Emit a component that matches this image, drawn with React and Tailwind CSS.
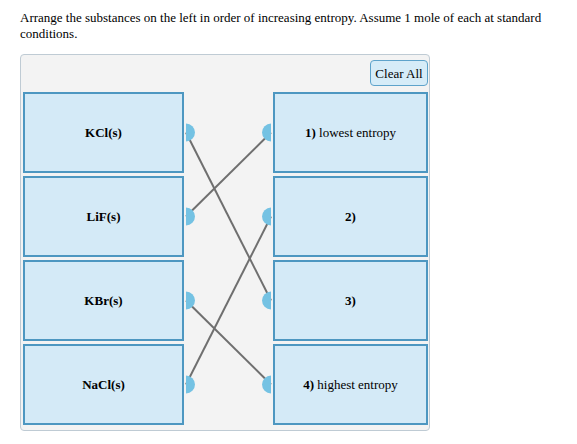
import React from 'react'

const leftItems = ['KCl(s)', 'LiF(s)', 'KBr(s)', 'NaCl(s)']
const rightItems = [
  { num: '1)', label: 'lowest entropy' },
  { num: '2)', label: '' },
  { num: '3)', label: '' },
  { num: '4)', label: 'highest entropy' },
]

// left index -> right index
const links = [
  [0, 2],
  [1, 0],
  [2, 3],
  [3, 1],
]

const PITCH = 84
const HALF = 40.5

function Wires() {
  const cy = (i) => i * PITCH + HALF
  return (
    <svg width="89" height="333" viewBox="0 0 89 333" className="shrink-0">
      {links.map(([a, b]) => (
        <line key={a} x1="2" y1={cy(a)} x2="87" y2={cy(b)} stroke="#6f6f6f" strokeWidth="2" />
      ))}
      {leftItems.map((_, i) => (
        <path key={'l' + i} d={`M2,${cy(i) - 9} A9,9 0 0 1 2,${cy(i) + 9} Z`} fill="#74c2e3" />
      ))}
      {rightItems.map((_, i) => (
        <path key={'r' + i} d={`M87,${cy(i) - 9} A9,9 0 0 0 87,${cy(i) + 9} Z`} fill="#74c2e3" />
      ))}
    </svg>
  )
}

export default function App() {
  return (
    <div className="pl-[20px] pt-[10px] [font-family:'Liberation_Serif',serif] text-[13px] text-black">
      <p className="w-[530px] leading-[16px]">
        Arrange the substances on the left in order of increasing entropy. Assume 1 mole of each at standard conditions.
      </p>

      <div className="mt-[12px] w-[410px] rounded-[4px] border border-[#bfcbd4] bg-[#f3f3f3] pt-[5px] pb-[5px] pl-[2px] pr-[1px]">
        <div className="flex justify-end">
          <button className="h-[26px] w-[58px] rounded-[4px] border border-[#5ea3cb] bg-[#d6ecf8] text-[13px] leading-none [font-family:'Liberation_Serif',serif]">
            Clear All
          </button>
        </div>

        <div className="mt-[6px] flex">
          <div className="flex w-[161px] shrink-0 flex-col gap-[3px]">
            {leftItems.map((t) => (
              <div
                key={t}
                className="flex h-[81px] items-center justify-center border-2 border-[#4d97c1] bg-[#d4eaf7] font-bold"
              >
                {t}
              </div>
            ))}
          </div>

          <Wires />

          <div className="flex w-[155px] shrink-0 flex-col gap-[3px]">
            {rightItems.map((r) => (
              <div
                key={r.num}
                className="flex h-[81px] items-center justify-center border-2 border-[#4d97c1] bg-[#d4eaf7]"
              >
                <span className="font-bold">{r.num}</span>
                {r.label && <span>&nbsp;{r.label}</span>}
              </div>
            ))}
          </div>
        </div>
      </div>
    </div>
  )
}
